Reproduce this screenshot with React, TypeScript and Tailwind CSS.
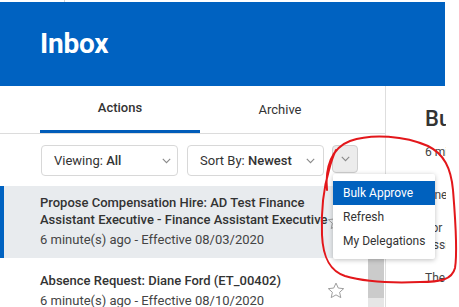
import React from "react";

const Chevron = ({ className = "" }: { className?: string }) => (
  <svg width="9" height="6" viewBox="0 0 9 6" className={className} fill="none">
    <polyline points="0.8,0.8 4.5,4.6 8.2,0.8" stroke="#8a8a8a" strokeWidth="1.1" />
  </svg>
);

const StarIcon = () => (
  <svg width="18" height="17" viewBox="0 0 24 23" fill="none" className="shrink-0">
    <polygon
      points="12,1.5 15.1,8.2 22.4,9 16.9,13.9 18.5,21.1 12,17.4 5.5,21.1 7.1,13.9 1.6,9 8.9,8.2"
      stroke="#9a9a9a"
      strokeWidth="1.3"
      strokeLinejoin="round"
    />
  </svg>
);

export default function App() {
  return (
    <div className="relative w-[459px] h-[307px] overflow-hidden bg-white font-['Roboto','Liberation_Sans',sans-serif] text-[#333]">
      <div className="w-[446px] h-full overflow-hidden flex flex-col">
        {/* top strip */}
        <div className="h-[2px] flex shrink-0">
          <div className="ml-[64px] w-px h-full bg-[#d4d4d4]" />
        </div>
        {/* header */}
        <div className="w-[445px] h-[84px] shrink-0 bg-[#0062c1] flex items-center pl-[40px]">
          <h1 className="text-white text-[28px] font-bold leading-none tracking-[-0.2px]">Inbox</h1>
        </div>

        <div className="flex h-[221px] shrink-0">
          {/* left panel */}
          <div className="w-[386px] shrink-0 border-r border-[#dedede] flex flex-col">
            {/* tabs */}
            <div className="flex h-[48px] border-b border-[#dcdcdc] pl-[40px]">
              <div className="w-[160px] flex flex-col">
                <div className="flex-1 flex items-center justify-center text-[13px] font-medium text-[#333]">Actions</div>
                <div className="h-[3px] bg-[#005cb9]" />
              </div>
              <div className="w-[160px] flex items-center justify-center text-[13px] text-[#333] pt-[1px]">Archive</div>
            </div>

            {/* filters */}
            <div className="flex items-start pl-[41px] mt-[11px]">
              <div className="w-[137px] h-[31px] border border-[#d8d8d8] rounded-[4px] flex items-center justify-between pl-[12px] pr-[6px] text-[13px]">
                <span>
                  Viewing: <span className="font-medium">All</span>
                </span>
                <Chevron />
              </div>
              <div className="ml-[9px] w-[137px] h-[31px] border border-[#d8d8d8] rounded-[4px] flex items-center justify-between pl-[12px] pr-[8px] text-[13px]">
                <span>
                  Sort By: <span className="font-medium">Newest</span>
                </span>
                <Chevron />
              </div>
              <div className="ml-[8px] w-[26px] h-[28px] bg-[#ececec] border border-[#cfcfcf] rounded-[4px] flex items-center justify-center">
                <Chevron />
              </div>
            </div>

            {/* list */}
            <div className="flex mt-[10px] flex-1 min-h-0">
              <div className="w-[368px] shrink-0 flex flex-col">
                <div className="flex items-center bg-[#e8ebee] border-l-[4px] border-[#0062c1] pl-[36px] pt-[8px] pb-[10px]">
                  <div className="w-[287px] shrink-0 whitespace-nowrap">
                    <div className="text-[13px] leading-[17px] font-medium text-[#333]">Propose Compensation Hire: AD Test Finance</div>
                    <div className="text-[13px] leading-[17px] font-medium text-[#333]">Assistant Executive - Finance Assistant Executive</div>
                    <div className="text-[13px] leading-[17px] mt-[3px] text-[#444]">6 minute(s) ago - Effective 08/03/2020</div>
                  </div>
                  <StarIcon />
                </div>
                <div className="flex items-center pl-[40px] pt-[14px] pb-[12px]">
                  <div className="w-[287px] shrink-0 whitespace-nowrap">
                    <div className="text-[13px] leading-[17px] font-medium text-[#333]">Absence Request: Diane Ford (ET_00402)</div>
                    <div className="text-[13px] leading-[17px] mt-[3px] text-[#444]">6 minute(s) ago - Effective 08/10/2020</div>
                  </div>
                  <StarIcon />
                </div>
              </div>
              <div className="w-[16px] shrink-0 bg-[#e6e6e6] flex flex-col">
                <div className="h-[112px] bg-[#cbcbcb]" />
              </div>
            </div>
          </div>

          {/* right panel */}
          <div className="flex-1 min-w-0 overflow-hidden whitespace-nowrap pl-[39px] flex flex-col">
            <div className="mt-[20px] text-[22px] leading-[26px] font-medium text-[#333]">Business Process</div>
            <div className="mt-[12px] text-[12px] leading-[16px] text-[#444]">6 minute(s) ago</div>
            <div className="mt-[27px] text-[12px] leading-[17px] text-[#444]">Line Manager</div>
            <div className="mt-[16px] text-[12px] leading-[17px] text-[#444]">For</div>
            <div className="text-[12px] leading-[17px] text-[#444]">Assistant Executive</div>
            <div className="mt-[16px] text-[12px] leading-[17px] text-[#444]">The</div>
          </div>
        </div>
      </div>

      {/* dropdown menu */}
      <div className="absolute left-[333px] top-[174px] w-[102px] bg-white rounded-[2px] shadow-[0_1px_5px_rgba(0,0,0,0.25)] py-[7px] pb-[6px]">
        <div className="h-[24px] flex items-center px-[10px] text-[12px] bg-[#0061be] text-white">Bulk Approve</div>
        <div className="h-[24px] flex items-center px-[10px] text-[12px] text-[#333]">Refresh</div>
        <div className="h-[24px] flex items-center px-[10px] text-[12px] text-[#333] whitespace-nowrap">My Delegations</div>
      </div>

      {/* red hand-drawn circle */}
      <svg className="absolute left-0 top-0 pointer-events-none" width="459" height="307" viewBox="0 0 459 307" fill="none">
        <path
          d="M327 190 C 325 168, 331 148, 350 141 C 372 133, 405 136, 428 146 C 444 154, 451 168, 453 190 C 455 215, 458 250, 455 268 C 452 280, 440 282, 420 282 C 395 283, 365 282, 345 276 C 330 271, 323 258, 322 235 C 321 210, 323 190, 329 170 C 331 162, 333 156, 336 150"
          stroke="#e3171b"
          strokeWidth="2"
          strokeLinecap="round"
        />
      </svg>
    </div>
  );
}
